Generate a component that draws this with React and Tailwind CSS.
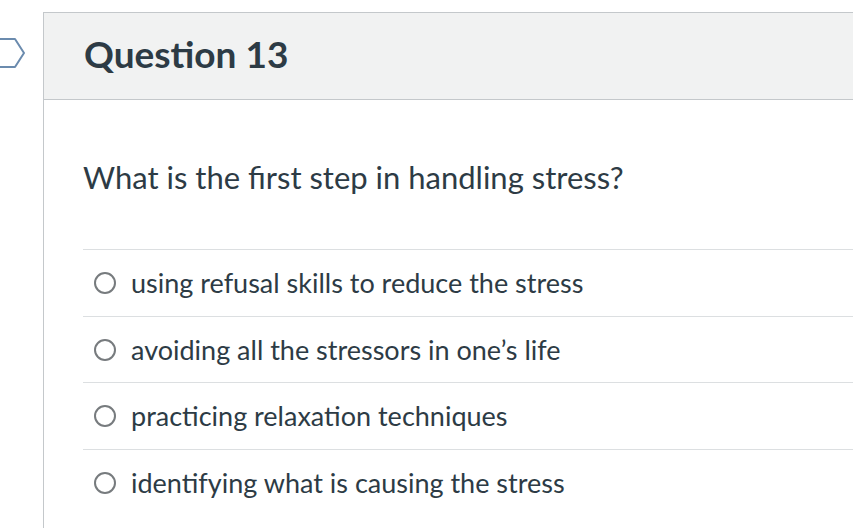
export default function App() {
  const answers = [
    "using refusal skills to reduce the stress",
    "avoiding all the stressors in one\u2019s life",
    "practicing relaxation techniques",
    "identifying what is causing the stress",
  ]

  return (
    <div className="w-[853px] h-[528px] overflow-hidden bg-white flex pt-[12px]" style={{ fontFamily: "Lato, 'Open Sans', sans-serif" }}>
      <div className="w-[43px] shrink-0 relative">
        <svg className="absolute left-0 top-[25px]" width="28" height="32" viewBox="0 0 28 32">
          <path d="M-4 2 H15 L24 16 L15 30 H-4" fill="none" stroke="#6b8bae" strokeWidth="2" strokeLinejoin="round" />
        </svg>
      </div>
      <div className="flex-1 min-w-[810px] border-l border-t border-[#c4c8cb]">
        <div className="h-[87px] bg-[#f1f2f2] border-b border-[#c4c8cb] flex items-center pl-[40px] pb-[5px]">
          <h2 className="text-[37px] font-bold text-[#2d3b45] leading-[44px]">Question 13</h2>
        </div>
        <div className="pl-[39px] pt-[57px]">
          <p className="text-[31px] text-[#2d3b45] leading-[40px] mb-[52px]">What is the first step in handling stress?</p>
          <div>
            {answers.map((a) => (
              <div key={a} className="border-t border-[#dcdfe1] h-[66.7px] flex items-center">
                <span className="ml-[11px] w-[22px] h-[22px] rounded-full border-2 border-[#777b7e] shrink-0" />
                <span className="ml-[15px] text-[27px] text-[#2d3b45] leading-[32px]">{a}</span>
              </div>
            ))}
          </div>
        </div>
      </div>
    </div>
  )
}
